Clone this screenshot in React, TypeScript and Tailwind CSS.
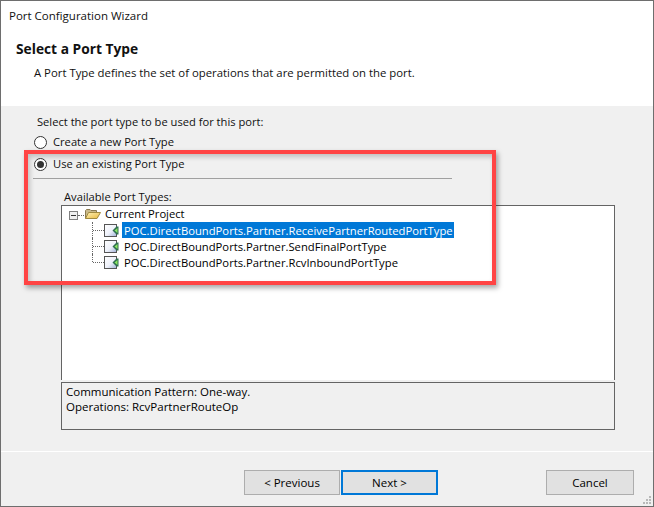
const font = { fontFamily: '"Open Sans", "Noto Sans", sans-serif' };

function Radio({ checked, label }: { checked?: boolean; label: string }) {
  return (
    <div className="flex h-[22px] items-center gap-[6px] pl-[34px]">
      <span className="flex h-[13px] w-[13px] items-center justify-center rounded-full border border-[#333333] bg-white">
        {checked && <span className="h-[7px] w-[7px] rounded-full bg-[#333333]" />}
      </span>
      <span className="text-[11.2px]">{label}</span>
    </div>
  );
}

function Folder() {
  return (
    <svg width="17" height="10" viewBox="0 0 17 10" className="shrink-0">
      <defs>
        <linearGradient id="fg" x1="0" y1="0" x2="1" y2="1">
          <stop offset="0" stopColor="#fff2b8" />
          <stop offset="1" stopColor="#e8b83c" />
        </linearGradient>
      </defs>
      <path d="M1.5 9.5V1.5L2.5 0.5H6L7 1.5H12.5V3" fill="#c9b98a" stroke="#8a7a50" />
      <path d="M1.5 9.5L4.5 3.5H16.5L13 9.5Z" fill="url(#fg)" stroke="#a08a40" />
    </svg>
  );
}

function PortIcon() {
  return (
    <svg width="15" height="13" viewBox="0 0 15 13" className="shrink-0">
      <defs>
        <linearGradient id="pg" x1="0" y1="0" x2="1" y2="1">
          <stop offset="0" stopColor="#ffffff" />
          <stop offset="0.55" stopColor="#eef1fa" />
          <stop offset="1" stopColor="#9fb0d8" />
        </linearGradient>
      </defs>
      <rect x="0.5" y="0.5" width="12" height="12" fill="url(#pg)" stroke="#555555" />
      <path d="M14.5 2.5V10.5H12.5L8.5 6.5L12.5 2.5Z" fill="#2f6f50" />
      <path d="M13.5 4V9L10.5 6.5Z" fill="#8be860" />
    </svg>
  );
}

function PortRow({ label, selected, last }: { label: string; selected?: boolean; last?: boolean }) {
  return (
    <div className="relative flex h-4 items-center pl-[42px]">
      <span className={`absolute left-[30px] top-0 w-0 border-l border-dotted border-[#666666] ${last ? "h-2" : "h-4"}`} />
      <span className="absolute left-[31px] top-2 w-[11px] border-t border-dotted border-[#666666]" />
      <PortIcon />
      <span className={`ml-[3px] flex h-4 items-center pl-[2px] pr-[1px] pt-px text-[11.25px] ${selected ? "bg-[#0078d7] text-white" : "text-black"}`}>
        {label}
      </span>
    </div>
  );
}

function Button({ label, primary }: { label: string; primary?: boolean }) {
  return (
    <button
      className={`flex h-[25px] items-center justify-center bg-[#e1e1e1] ${
        primary ? "w-[97px] border-2 border-[#0078d7]" : "border border-[#adadad]"
      } ${label === "Cancel" ? "w-[88px]" : ""} ${label.startsWith("<") ? "w-[96px]" : ""}`}
    >
      {label}
    </button>
  );
}

export default function App() {
  return (
    <div
      style={font}
      className="relative flex h-[507px] w-[654px] flex-col overflow-hidden border border-[#6e6e6e] bg-white text-[11.5px] leading-4 text-[#111111]"
    >
      <div className="flex h-[105px] shrink-0 flex-col">
        <div className="pl-2 pt-[7px]">Port Configuration Wizard</div>
        <div className="pl-[15px] pt-[16px] text-[13.75px] font-bold leading-[18px]">Select a Port Type</div>
        <div className="pl-[33px] pt-[7px] text-[11.35px]">A Port Type defines the set of operations that are permitted on the port.</div>
      </div>

      <div className="flex flex-1 flex-col bg-[#f0f0f0]">
        <div className="pl-9 pt-2 text-[11.15px]">Select the port type to be used for this port:</div>
        <div className="-ml-px pt-[1px]">
          <Radio label="Create a new Port Type" />
          <Radio checked label="Use an existing Port Type" />
        </div>
        <div className="ml-8 mt-[3px] h-px w-[419px] bg-[#a0a0a0]" />
        <div className="pl-[63px] pt-[10px] text-[11.2px]">Available Port Types:</div>
        <div className="ml-[60px] h-[175px] w-[554px] border-x border-t border-[#646464] bg-white text-black">
          <div className="relative flex h-4 items-center pl-[22px]">
            <span className="absolute left-[7px] top-[5px] flex h-[9px] w-[9px] items-center justify-center border border-[#808080] bg-[#f0f0f0]">
              <span className="h-px w-[5px] bg-[#333333]" />
            </span>
            <span className="absolute left-[16px] top-[9px] w-[6px] border-t border-dotted border-[#666666]" />
            <Folder />
            <span className="ml-[4px] text-[11.2px]">Current Project</span>
          </div>
          <PortRow label="POC.DirectBoundPorts.Partner.ReceivePartnerRoutedPortType" selected />
          <PortRow label="POC.DirectBoundPorts.Partner.SendFinalPortType" />
          <PortRow label="POC.DirectBoundPorts.Partner.RcvInboundPortType" last />
        </div>
        <div className="ml-[60px] mt-[2px] h-[48px] w-[554px] border border-[#646464] pl-1 pt-[1px] text-black">
          <div className="leading-[15px]">Communication Pattern: One-way.</div>
          <div className="leading-[15px]">Operations: RcvPartnerRouteOp</div>
        </div>
        <div className="mt-[21px] h-px w-full bg-white" />
        <div className="flex pl-[243px] pt-[18px] text-black">
          <Button label="< Previous" />
          <div className="ml-[1px]">
            <Button label="Next >" primary />
          </div>
          <div className="ml-[108px]">
            <Button label="Cancel" />
          </div>
        </div>
      </div>

      <svg width="10" height="10" viewBox="0 0 10 10" className="absolute bottom-[1px] right-[1px]">
        <g fill="#b8b8b8">
          <rect x="7" y="1" width="2" height="2" />
          <rect x="4" y="4" width="2" height="2" />
          <rect x="7" y="4" width="2" height="2" />
          <rect x="1" y="7" width="2" height="2" />
          <rect x="4" y="7" width="2" height="2" />
          <rect x="7" y="7" width="2" height="2" />
        </g>
      </svg>

      <div className="absolute left-[23px] top-[149px] h-[135px] w-[472px] border-4 border-[#ff4444] shadow-[2px_3px_5px_rgba(0,0,0,0.35),inset_2px_3px_5px_rgba(0,0,0,0.2)]" />
    </div>
  );
}
